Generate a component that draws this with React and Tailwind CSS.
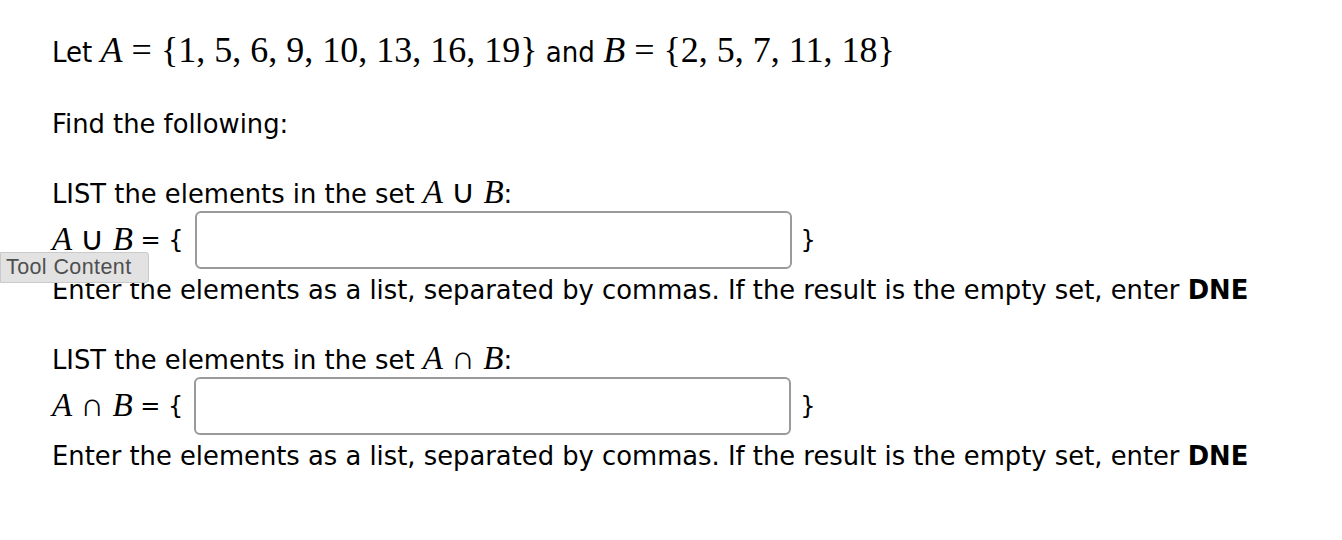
export default function App() {
  const body = { fontFamily: '"DejaVu Sans", sans-serif' };
  const serif = { fontFamily: '"Liberation Serif", serif' };
  const cond = { fontFamily: '"DejaVu Sans Condensed", "DejaVu Sans", sans-serif' };
  return (
    <div className="relative w-[1342px] h-[540px] bg-white text-black" style={body}>
      <div className="pl-[52px] pt-[26px] flex flex-col">
        <div className="flex items-baseline h-[48px] text-[29px] leading-[48px]">
          <span style={cond}>Let&nbsp;</span>
          <span className="text-[36px]" style={serif}>
            <i>A</i>&nbsp;=&nbsp;{'{'}1, 5, 6, 9, 10, 13, 16, 19{'}'}
          </span>
          <span style={cond}>&nbsp;and&nbsp;</span>
          <span className="text-[36px]" style={serif}>
            <i>B</i>&nbsp;=&nbsp;{'{'}2, 5, 7, 11, 18{'}'}
          </span>
        </div>
        <div className="text-[25.8px] mt-[33px] h-[34px] leading-[34px]">Find the following:</div>
        <Section op="∪" />
        <Section op="∩" />
      </div>
      <div
        className="absolute left-0 top-[252px] h-[31px] w-[149px] pl-[5px] flex items-center bg-[#e2e2e2] border border-[#cacaca] rounded-r-[3px] text-[21.5px] tracking-[0.4px] text-[#4f4f4f]"
        style={{ fontFamily: '"Liberation Sans", Arial, sans-serif' }}
      >
        Tool Content
      </div>
    </div>
  );
}

function Section({ op }) {
  const serif = { fontFamily: '"Liberation Serif", serif' };
  return (
    <div className="flex flex-col text-[25.8px] mt-[34px]">
      <div className="h-[34px] leading-[34px] flex items-baseline">
        <span>LIST the elements in the set&nbsp;</span>
        <span className="text-[33px]" style={serif}>
          <i>A</i>&nbsp;{op}&nbsp;<i>B</i>
        </span>
        <span>:</span>
      </div>
      <div className="flex items-center h-[58px] mt-[2px]">
        <span className="text-[33px]" style={serif}>
          <i>A</i>&nbsp;{op}&nbsp;<i>B</i>
        </span>
        <span className="text-[24px]">&nbsp;= {'{'}</span>
        <div className="ml-[11px] w-[597px] h-[58px] border-2 border-[#9a9a9a] rounded-[6px] bg-white"></div>
        <span className="ml-[9px] text-[24px]">{'}'}</span>
      </div>
      <div className="h-[34px] leading-[34px] mt-[4px]">
        Enter the elements as a list, separated by commas. If the result is the empty set, enter <b>DNE</b>
      </div>
    </div>
  );
}
